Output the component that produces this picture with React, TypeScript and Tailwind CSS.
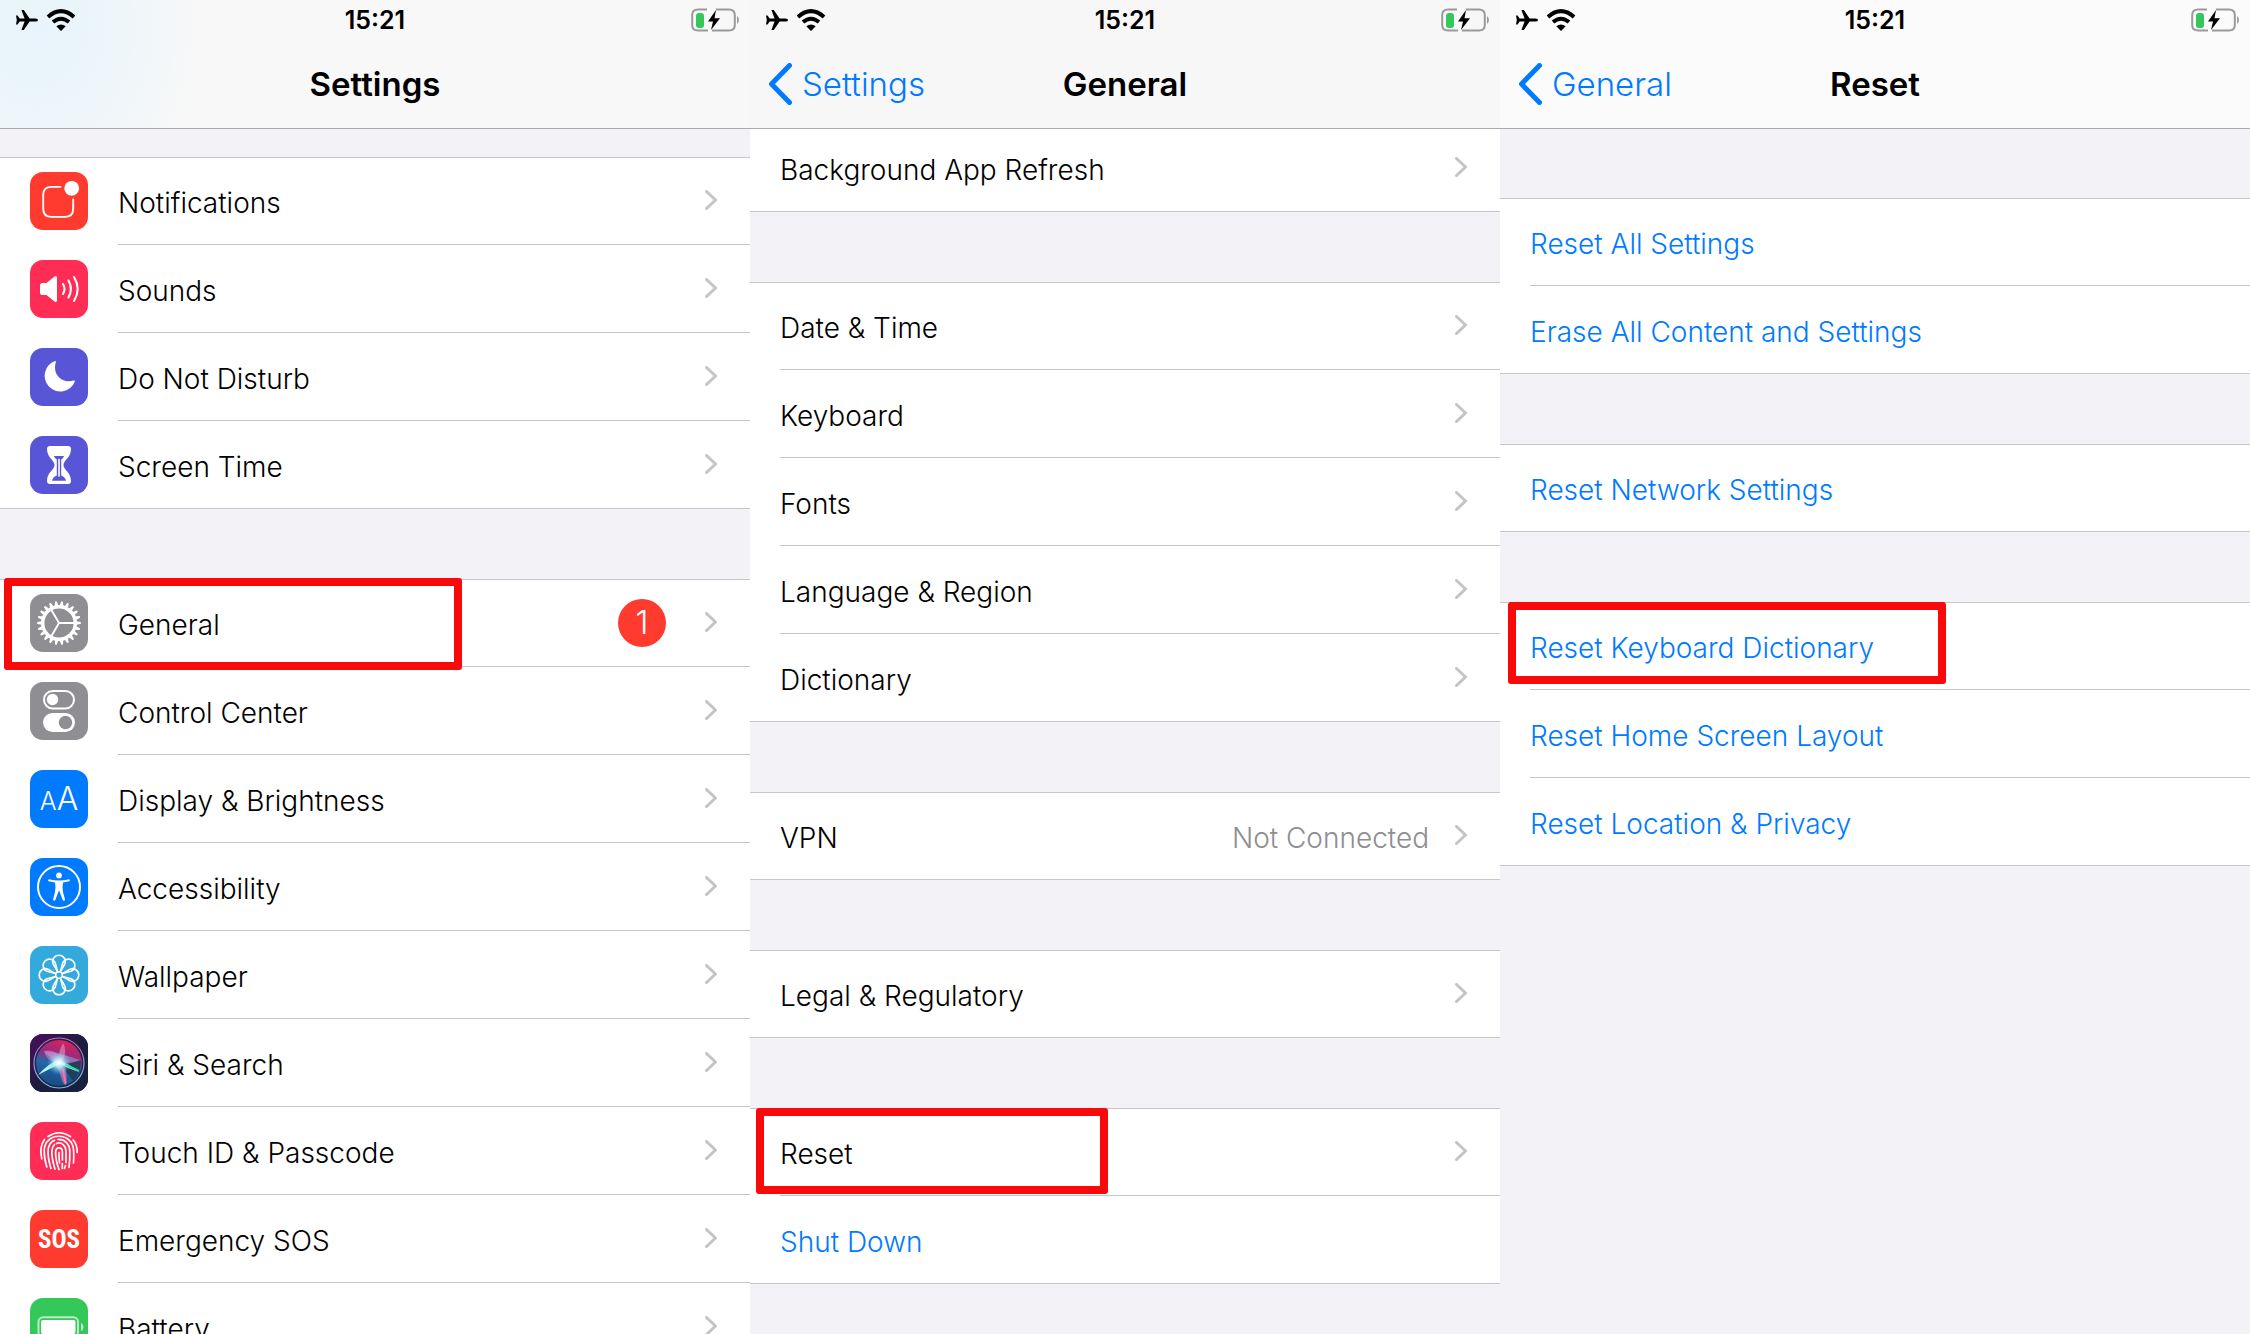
import React from "react";

type Item = {
  label: string;
  icon?: React.ReactNode;
  iconBg?: string;
  value?: string;
  badge?: number;
  action?: boolean;
  mark?: string;
};

const SPOKES = Array.from({ length: 22 }, (_, i) => (i * 360) / 22);
const PETALS = [0, 45, 90, 135, 180, 225, 270, 315];

function Glyph({ children }: { children: React.ReactNode }) {
  return (
    <svg viewBox="0 0 58 58" className="size-[58px]" fill="none" stroke="white" strokeLinecap="round" strokeLinejoin="round" aria-hidden="true">
      {children}
    </svg>
  );
}

const NotificationsIcon = () => (
  <Glyph>
    <path d="M30.5 14.9H21.5Q13.2 14.9 13.2 23V36.5Q13.2 44.9 21.5 44.9H35Q43.2 44.9 43.2 36.5V27.5" strokeWidth="1.9" />
    <circle cx="41.7" cy="16.3" r="7.4" fill="white" stroke="none" />
  </Glyph>
);

const SoundsIcon = () => (
  <Glyph>
    <path d="M12.5 23H16.5L24.5 16.6Q27 15 27 18V40Q27 43 24.5 41.4L16.5 35H12.5Q10 35 10 32.5V25.5Q10 23 12.5 23Z" fill="white" stroke="none" />
    <path d="M33 24Q36 29 33 34M38.5 20.5Q43.2 29 38.5 37.5M44 17Q51.4 29 44 41" strokeWidth="2.1" />
  </Glyph>
);

const MoonIcon = () => (
  <Glyph>
    <path d="M25 13A15.7 15.7 0 1 0 44.8 33.8Q45.2 32 43.5 32.6C33 35.5 22 27.5 25.8 14.2Q26.2 12.7 25 13Z" fill="white" stroke="none" />
  </Glyph>
);

const HourglassIcon = () => (
  <Glyph>
    <path d="M20 10H38Q41 10 41 13C41 22 33.5 24 33.5 29S41 36 41 45Q41 48 38 48H20Q17 48 17 45C17 36 24.5 34 24.5 29S17 22 17 13Q17 10 20 10Z" fill="white" stroke="none" />
    <path d="M24 20H34Q33.5 22 31.2 23.5V39.5Q35.5 41.5 36 44.8H22Q22.5 41.5 26.8 39.5V23.5Q24.500 22 24 20Z" fill="#5856d6" stroke="none" />
    <path d="M29 23.5V40" strokeWidth="1.6" />
  </Glyph>
);

const GearIcon = () => (
  <Glyph>
    <circle cx="29" cy="29" r="16.3" strokeWidth="3.4" />
    {SPOKES.map((a) => (
      <path key={a} d="M46.5 27.2L50.6 28.1Q51.4 29 50.6 29.9L46.5 30.8Z" fill="white" stroke="none" transform={`rotate(${a} 29 29)`} />
    ))}
    <path d="M29 29H45M29 29L21 15.2M29 29L21 42.8" strokeWidth="1.9" />
  </Glyph>
);

const ControlIcon = () => (
  <Glyph>
    <rect x="14" y="9" width="30" height="17.5" rx="8.75" strokeWidth="2" />
    <circle cx="22.5" cy="17.5" r="5.7" fill="white" stroke="none" />
    <rect x="13" y="31" width="32" height="19" rx="9.5" fill="white" stroke="none" />
    <circle cx="35.5" cy="40.5" r="6.7" fill="#8e8e93" stroke="none" />
  </Glyph>
);

const DisplayIcon = () => (
  <span className="flex items-baseline leading-none text-white">
    <span className="text-[25px]">A</span>
    <span className="text-[32px]">A</span>
  </span>
);

const AccessibilityIcon = () => (
  <Glyph>
    <circle cx="29" cy="29" r="21" strokeWidth="2" />
    <circle cx="29" cy="17.4" r="2.9" fill="white" stroke="none" />
    <path d="M18.8 21.2Q29 23.6 39.2 21.2Q40.8 22.2 39.4 23.3L33 24.6Q32 29 33 34L35 41.5Q34.5 43.4 32.8 42.3L29.3 33H28.7L25.2 42.3Q23.5 43.4 23 41.5L25 34Q26 29 25 24.6L18.6 23.3Q17.2 22.2 18.8 21.2Z" fill="white" stroke="none" />
  </Glyph>
);

const WallpaperIcon = () => (
  <Glyph>
    {PETALS.map((a) => (
      <path key={a} d="M27.6 25.6L23.2 18A6.3 6.3 0 1 1 34.8 18L30.4 25.6" strokeWidth="1.6" transform={`rotate(${a} 29 29)`} />
    ))}
    <circle cx="29" cy="29" r="3.3" strokeWidth="1.5" />
  </Glyph>
);

const SiriIcon = () => (
  <Glyph>
    <defs>
      <linearGradient id="siriBg" x1="0" y1="0" x2="1" y2="1">
        <stop offset="0" stopColor="#4a0f60" />
        <stop offset="0.5" stopColor="#1d1c3f" />
        <stop offset="1" stopColor="#14233f" />
      </linearGradient>
      <linearGradient id="siriOrb" x1="0.6" y1="0" x2="0.35" y2="1">
        <stop offset="0" stopColor="#d8235f" />
        <stop offset="0.3" stopColor="#9a2a7a" />
        <stop offset="0.55" stopColor="#2467a8" />
        <stop offset="1" stopColor="#174a80" />
      </linearGradient>
      <linearGradient id="siriRing" x1="0" y1="0" x2="0" y2="1">
        <stop offset="0" stopColor="#c56aa8" />
        <stop offset="1" stopColor="#65c6d6" />
      </linearGradient>
      <radialGradient id="siriGlow">
        <stop offset="0" stopColor="#ffffff" />
        <stop offset="0.35" stopColor="#c8fafa" stopOpacity="0.8" />
        <stop offset="1" stopColor="#4bc4e8" stopOpacity="0" />
      </radialGradient>
    </defs>
    <rect width="58" height="58" fill="url(#siriBg)" stroke="none" />
    <circle cx="29" cy="29" r="25" fill="#242050" stroke="url(#siriRing)" strokeWidth="1.2" />
    <circle cx="29" cy="29" r="23" fill="url(#siriOrb)" stroke="none" />
    <path d="M30 29L51 27Q51 39 43 47Z" fill="#1c3a4c" fillOpacity="0.8" stroke="none" />
    <path d="M14 17Q28 14 34 30Q38 42 36 51Q33 51 31 43Q28 30 14 17Z" fill="#ef7fd0" fillOpacity="0.55" stroke="none" />
    <path d="M14 17Q30 19 50 26Q39 31 26 29Q16 26 14 17Z" fill="#b8a3da" fillOpacity="0.5" stroke="none" />
    <path d="M33 9Q38 17 32 29Q26 21 33 9Z" fill="#f7a3cb" fillOpacity="0.5" stroke="none" />
    <path d="M8 41Q19 29 28 26Q40 30 49 38Q38 34.5 30 30Q19 35 8 41Z" fill="#b5f7f0" stroke="none" />
    <path d="M36 31L48 36.5" stroke="#35d6a0" strokeWidth="2" />
    <path d="M33 36L35.5 49" stroke="#fb6fa8" strokeWidth="2" />
    <circle cx="29" cy="29" r="12" fill="url(#siriGlow)" stroke="none" />
  </Glyph>
);

const TouchIcon = () => (
  <Glyph>
    <g strokeWidth="1.7">
      <path d="M18 14.5Q29 7 40.5 14.5" />
      <path d="M14.5 17.5Q9 25 11.8 37" />
      <path d="M43.2 18Q47.5 23 47.2 30.5" />
      <path d="M16.8 45Q14 36 14.2 28.5C14.7 9.5 43 9.5 43.6 28.5Q44 35 43.5 41" />
      <path d="M21 46.5Q18 37 18 29.5C18 23 21.5 19 24.5 18.3M28 17.5C35 17 39.8 22.5 39.8 29.5Q40 38 39 45.5" />
      <path d="M25 47Q21.8 37 21.8 29.5Q22 25 24.5 22.5M26.5 21.5C31.5 19.5 36 24 36 29.5V40.5M35.5 43.5L34.5 46.5" />
      <path d="M29 47.5Q25.5 38 25.6 30C25.8 24.5 32.2 24.5 32.4 30V38M32.3 41.5V46.5" />
      <path d="M29 30.5Q28.8 35 29.5 41" />
    </g>
  </Glyph>
);

const SosIcon = () => <span className="font-['Liberation_Sans_Narrow','Roboto_Condensed',Roboto,sans-serif] text-[25px] font-bold leading-none text-white">SOS</span>;

const BatteryIcon = () => (
  <Glyph>
    <rect x="8.5" y="19.3" width="39.5" height="19.5" rx="4.5" strokeWidth="2" strokeOpacity="0.65" />
    <rect x="11" y="22" width="34.5" height="14" rx="2" fill="white" stroke="none" />
    <path d="M51 25Q53.5 26 53.5 29T51 33Z" fill="white" fillOpacity="0.65" stroke="none" />
  </Glyph>
);

const settingsTop: Item[] = [
  { label: "Notifications", icon: <NotificationsIcon />, iconBg: "bg-[#ff3b30]" },
  { label: "Sounds", icon: <SoundsIcon />, iconBg: "bg-[#ff2d55]" },
  { label: "Do Not Disturb", icon: <MoonIcon />, iconBg: "bg-[#5856d6]" },
  { label: "Screen Time", icon: <HourglassIcon />, iconBg: "bg-[#5856d6]" },
];

const settingsMain: Item[] = [
  { label: "General", icon: <GearIcon />, iconBg: "bg-[#8e8e93]", badge: 1, mark: "-top-px left-1 w-[458px] h-[92px]" },
  { label: "Control Center", icon: <ControlIcon />, iconBg: "bg-[#8e8e93]" },
  { label: "Display & Brightness", icon: <DisplayIcon />, iconBg: "bg-[#007aff]" },
  { label: "Accessibility", icon: <AccessibilityIcon />, iconBg: "bg-[#007aff]" },
  { label: "Wallpaper", icon: <WallpaperIcon />, iconBg: "bg-[#34aadc]" },
  { label: "Siri & Search", icon: <SiriIcon />, iconBg: "bg-[#1d1c3f]" },
  { label: "Touch ID & Passcode", icon: <TouchIcon />, iconBg: "bg-[#ff2d55]" },
  { label: "Emergency SOS", icon: <SosIcon />, iconBg: "bg-[#ff3b30]" },
  { label: "Battery", icon: <BatteryIcon />, iconBg: "bg-[#34c759]" },
];

const generalGroups: Item[][] = [
  [{ label: "Background App Refresh" }],
  [{ label: "Date & Time" }, { label: "Keyboard" }, { label: "Fonts" }, { label: "Language & Region" }, { label: "Dictionary" }],
  [{ label: "VPN", value: "Not Connected" }],
  [{ label: "Legal & Regulatory" }],
  [{ label: "Reset", mark: "top-0 left-1.5 w-[352px] h-[86px]" }, { label: "Shut Down", action: true }],
];

const resetGroups: Item[][] = [
  [{ label: "Reset All Settings", action: true }, { label: "Erase All Content and Settings", action: true }],
  [{ label: "Reset Network Settings", action: true }],
  [
    { label: "Reset Keyboard Dictionary", action: true, mark: "top-0 left-2 w-[438px] h-[82px]" },
    { label: "Reset Home Screen Layout", action: true },
    { label: "Reset Location & Privacy", action: true },
  ],
];

function StatusBar() {
  return (
    <div className="grid h-10 grid-cols-3 items-center px-[11px]">
      <div className="flex items-center gap-2 pl-[5px]">
        <svg viewBox="0 0 22 20" className="h-5 w-[22px]" aria-label="Airplane mode">
          <path d="M22 10Q22 11.6 19.5 11.6H13.6L7.8 20H5.4L8.6 11.6H3.6L1.6 14.6H0L0.8 10L0 5.4H1.6L3.6 8.4H8.6L5.4 0H7.8L13.6 8.4H19.5Q22 8.4 22 10Z" />
        </svg>
        <svg viewBox="0 0 30 22" className="h-[22px] w-[30px]" fill="none" stroke="black" aria-label="Wi-Fi">
          <path d="M2 8Q15 -3.6 28 8" strokeWidth="4" />
          <path d="M7 13Q15 6.4 23 13" strokeWidth="4" />
          <path d="M15 22L10.3 17.3Q15 13.8 19.7 17.3Z" fill="black" stroke="none" />
        </svg>
      </div>
      <time className="pt-0.5 text-center text-[25px] font-semibold">15:21</time>
      <svg viewBox="0 0 49 24" className="h-6 w-[49px] justify-self-end" aria-label="Battery charging">
        <path d="M17 1.5H8Q2.2 1.5 2.2 7V17Q2.2 22.5 8 22.5H18M26 1.5H39Q44.8 1.5 44.8 7V17Q44.8 22.5 39 22.5H22" fill="none" stroke="#9a9a9a" strokeWidth="2" />
        <rect x="6" y="5" width="8" height="15" rx="3" fill="#34c759" />
        <path d="M26 2L18 13.5H23L21 22L30 10.2H24.5Z" />
        <path d="M47 8Q49 9.5 49 12T47 16Z" fill="#9a9a9a" />
      </svg>
    </div>
  );
}

function Header({ title, back, className }: { title: string; back?: string; className: string }) {
  return (
    <header className={`relative z-10 h-[129px] shrink-0 border-b border-[#aaaaaf] ${className}`}>
      <StatusBar />
      <div className="grid h-[88px] grid-cols-[1fr_auto_1fr] items-center">
        {back ? (
          <a href="#" className="flex items-center gap-2.5 pl-[18px] text-[33px] font-[350] text-[#007aff]">
            <svg viewBox="0 0 24 42" className="h-[42px] w-6" fill="none" stroke="currentColor" strokeWidth="5" strokeLinecap="round" strokeLinejoin="round" aria-hidden="true">
              <path d="M21.5 2.5L3.5 21L21.5 39.5" />
            </svg>
            <span className="pt-0.5">{back}</span>
          </a>
        ) : (
          <span />
        )}
        <h1 className="pt-0.5 text-[33px] font-semibold">{title}</h1>
      </div>
    </header>
  );
}

function Row({ item, first, last }: { item: Item; first: boolean; last: boolean }) {
  const inset = item.icon ? "left-[118px]" : "left-[30px]";
  return (
    <li className="relative">
      <a href="#" className={`flex h-[88px] items-center pl-[30px] pr-[33px] text-[28px] font-[350] ${item.action ? "text-[#007aff]" : "text-black"}`}>
        {item.icon && <span className={`mr-[30px] flex size-[58px] items-center justify-center overflow-hidden rounded-[13px] ${item.iconBg}`}>{item.icon}</span>}
        <span className="flex-1 pt-[3px]">{item.label}</span>
        {item.value && <span className="mr-[26px] pt-[3px] text-[#8e8e93]">{item.value}</span>}
        {item.badge && <span className="mr-[39px] flex size-12 items-center justify-center rounded-full bg-[#ff3b30] text-[33px] text-white">{item.badge}</span>}
        {!item.action && (
          <svg viewBox="0 0 12 20" className="mb-0.5 h-5 w-3" fill="none" stroke="#c4c4c6" strokeWidth="3" strokeLinecap="round" strokeLinejoin="round" aria-hidden="true">
            <path d="M1.5 1.5L10.5 10L1.5 18.5" />
          </svg>
        )}
      </a>
      {first && <span className="absolute inset-x-0 top-0 h-px bg-[#c6c6c8]" />}
      <span className={`absolute bottom-0 right-0 h-px bg-[#c6c6c8] ${last ? "left-0" : inset}`} />
      {item.mark && <span className={`absolute z-10 rounded-[3px] border-8 border-[#f90909] ${item.mark}`} />}
    </li>
  );
}

function Group({ items }: { items: Item[] }) {
  return (
    <ul className="bg-white">
      {items.map((item, i) => (
        <Row key={item.label} item={item} first={i === 0} last={i === items.length - 1} />
      ))}
    </ul>
  );
}

function Screen({ title, back, headerClass, bodyClass, groups }: { title: string; back?: string; headerClass: string; bodyClass: string; groups: Item[][] }) {
  return (
    <section className="flex min-w-0 flex-col overflow-hidden bg-[#f2f2f7]">
      <Header title={title} back={back} className={headerClass} />
      <div className={`flex flex-col gap-[70px] ${bodyClass}`}>
        {groups.map((items) => (
          <Group key={items[0].label} items={items} />
        ))}
      </div>
    </section>
  );
}

export default function App() {
  return (
    <main className="grid h-screen grid-cols-3 overflow-hidden font-[Inter,sans-serif] text-black">
      <Screen
        title="Settings"
        headerClass="bg-[radial-gradient(ellipse_22%_160%_at_5%_20%,#e8f4fb_0%,#eaf5fa_30%,#f8f8f8_100%)]"
        bodyClass="pt-7"
        groups={[settingsTop, settingsMain]}
      />
      {/* scrolled a little, so the first row slides under the header */}
      <Screen title="General" back="Settings" headerClass="bg-[#f7f7f7]" bodyClass="-mt-[5px]" groups={generalGroups} />
      <Screen title="Reset" back="General" headerClass="bg-[#fbfbfb]" bodyClass="pt-[69px]" groups={resetGroups} />
    </main>
  );
}
